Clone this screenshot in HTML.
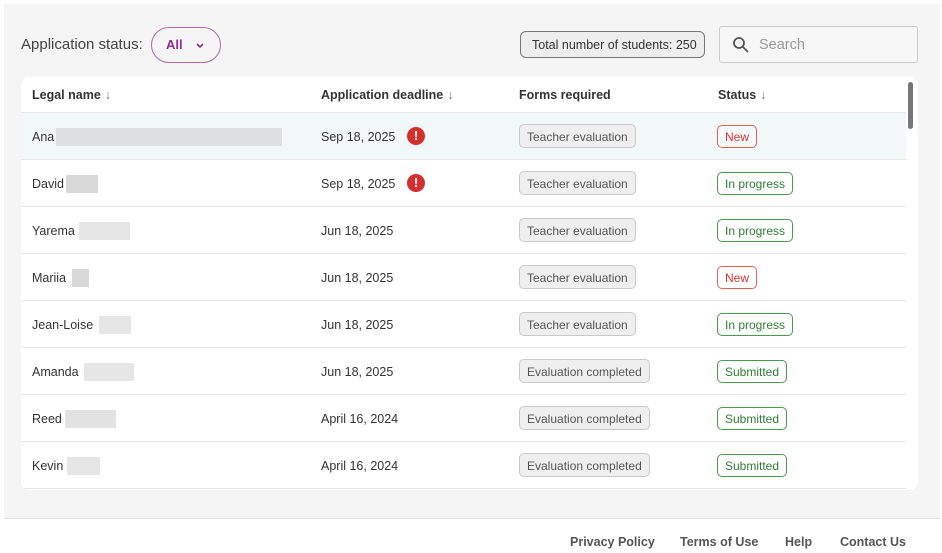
<!DOCTYPE html>
<html><head><style>
*{box-sizing:border-box;margin:0;padding:0}
body{width:942px;height:553px;background:#fff;font-family:"Liberation Sans",sans-serif;color:#333;position:relative;overflow:hidden}
.bg{position:absolute;left:4px;top:4px;width:936px;height:515px;background:#f5f5f5;border-bottom:1px solid #e4e4e4}
.lbl{position:absolute;left:21px;top:36px;font-size:15px;color:#444}
.all{position:absolute;left:151px;top:27px;width:70px;height:36px;border:1.5px solid #b06aa8;border-radius:18px;color:#8b2f8f;font-size:13px;font-weight:bold;padding:9px 0 0 14px}
.total{position:absolute;left:520px;top:31px;width:185px;height:27px;border:1px solid #777;border-radius:6px;background:#eee;font-size:12.5px;padding:6px 0 0 11px;color:#333}
.search{position:absolute;left:719px;top:26px;width:199px;height:37px;border:1px solid #ccc;border-radius:3px;background:#f7f7f7;font-size:14.5px;color:#999;padding:10px 0 0 39px}
.card{position:absolute;left:21px;top:77px;width:897px;height:413px;background:#fff;border-radius:8px;overflow:hidden}
.row{position:absolute;left:0;width:885px;height:47px;border-bottom:1px solid #e6e6e6;font-size:12.5px;color:#333}
.row span{position:absolute;top:17px}
.hd{height:36px;font-weight:bold;font-size:12.5px}
.hd span{top:11px}
.ar{color:#777;font-weight:normal;margin-left:4px}
.chip{position:absolute;top:11px;height:24px;border:1px solid #c9c9c9;border-radius:5px;background:#efefef;font-size:12px;padding:5px 7px 0;color:#555}
.st{position:absolute;left:696px;top:12px;height:23px;border:1px solid;border-radius:5px;font-size:12px;padding:4px 7px 0}
.new{color:#d33;border-color:#e06060}
.prog{color:#2e7d32;border-color:#4c9a50}
.blur{position:absolute;top:15px;height:18px;background:#d8d8d8}
.err{position:absolute;left:386px;top:14px;width:18px;height:18px;border-radius:50%;background:#d32f2f;color:#fff;font-size:13px;font-weight:bold;text-align:center;line-height:18px}
.sb{position:absolute;left:887px;top:5px;width:5px;height:47px;border-radius:3px;background:#777}
.foot{position:absolute;top:535px;font-size:12.5px;color:#555;font-weight:bold}
</style></head><body>
<div class="bg"></div>
<div class="lbl">Application status:</div>
<div class="all">All <svg width="10" height="7" style="margin-left:9px" viewBox="0 0 10 7"><path d="M2 2l3 3 3-3" fill="none" stroke="#8b2f8f" stroke-width="1.6"/></svg></div>
<div class="total">Total number of students: 250</div>
<div class="search"><svg style="position:absolute;left:12px;top:9px" width="18" height="18" viewBox="0 0 18 18"><circle cx="7" cy="7" r="5" fill="none" stroke="#555" stroke-width="1.8"/><path d="M11 11l5 5" stroke="#555" stroke-width="1.8"/></svg>Search</div>
<div class="card">
<div class="row hd" style="top:0"><span style="left:11px">Legal name<i class="ar">↓</i></span><span style="left:300px">Application deadline<i class="ar">↓</i></span><span style="left:498px">Forms required</span><span style="left:697px">Status<i class="ar">↓</i></span></div>
<div class="row" style="top:36px;background:#f2f8f8"><span style="left:11px">Ana</span><div class="blur" style="left:35px;width:226px;background:#dde0e0"></div><span style="left:300px">Sep 18, 2025</span><div class="err">!</div><div class="chip" style="left:498px">Teacher evaluation</div><div class="st new">New</div></div>
<div class="row" style="top:83px"><span style="left:11px">David</span><div class="blur" style="left:45px;width:32px"></div><span style="left:300px">Sep 18, 2025</span><div class="err">!</div><div class="chip" style="left:498px">Teacher evaluation</div><div class="st prog">In progress</div></div>
<div class="row" style="top:130px"><span style="left:11px">Yarema</span><div class="blur" style="left:58px;width:51px;background:#e6e6e6"></div><span style="left:300px">Jun 18, 2025</span><div class="chip" style="left:498px">Teacher evaluation</div><div class="st prog">In progress</div></div>
<div class="row" style="top:177px"><span style="left:11px">Mariia</span><div class="blur" style="left:51px;width:17px"></div><span style="left:300px">Jun 18, 2025</span><div class="chip" style="left:498px">Teacher evaluation</div><div class="st new">New</div></div>
<div class="row" style="top:224px"><span style="left:11px">Jean-Loise</span><div class="blur" style="left:78px;width:32px;background:#e6e6e6"></div><span style="left:300px">Jun 18, 2025</span><div class="chip" style="left:498px">Teacher evaluation</div><div class="st prog">In progress</div></div>
<div class="row" style="top:271px"><span style="left:11px">Amanda</span><div class="blur" style="left:63px;width:50px;background:#e6e6e6"></div><span style="left:300px">Jun 18, 2025</span><div class="chip" style="left:498px">Evaluation completed</div><div class="st prog">Submitted</div></div>
<div class="row" style="top:318px"><span style="left:11px">Reed</span><div class="blur" style="left:44px;width:51px;background:#e2e2e2"></div><span style="left:300px">April 16, 2024</span><div class="chip" style="left:498px">Evaluation completed</div><div class="st prog">Submitted</div></div>
<div class="row" style="top:365px"><span style="left:11px">Kevin</span><div class="blur" style="left:46px;width:33px;background:#e6e6e6"></div><span style="left:300px">April 16, 2024</span><div class="chip" style="left:498px">Evaluation completed</div><div class="st prog">Submitted</div></div>
<div class="sb"></div>
</div>
<div class="foot" style="left:570px">Privacy Policy</div>
<div class="foot" style="left:680px">Terms of Use</div>
<div class="foot" style="left:785px">Help</div>
<div class="foot" style="left:840px">Contact Us</div>
</body></html>
